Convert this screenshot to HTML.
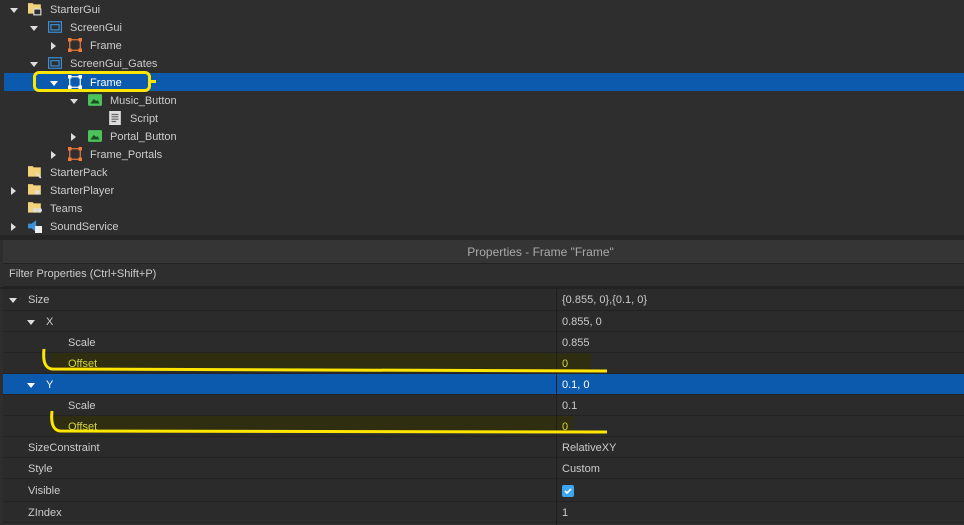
<!DOCTYPE html><html><head><style>
*{margin:0;padding:0;box-sizing:border-box}
body{width:964px;height:525px;background:#2e2e2e;font-family:"Liberation Sans",sans-serif;font-size:11px;color:#cccccc;position:relative;overflow:hidden}
.a{position:absolute}
.tr{position:absolute;left:0;width:964px;height:18px;line-height:20px}
.tri{position:absolute;width:0;height:0}
.down{border-left:4px solid transparent;border-right:4px solid transparent;border-top:5px solid #ddd;top:8px}
.right{border-top:4px solid transparent;border-bottom:4px solid transparent;border-left:5px solid #ddd;top:6px}
.row{position:absolute;left:3px;width:961px;background:#2b2b2b;border-bottom:1px solid #232323}
.row span{position:absolute;top:1px}
.v{left:559px}
.sep{position:absolute;left:556px;top:289px;width:1px;height:236px;background:#1e1e1e}
.ic{position:absolute;top:2px;width:14px;height:14px}
</style></head><body>
<div class="tr" style="top:0"><div class="tri down" style="left:10px"></div>
<svg class="ic" style="left:28px" viewBox="0 0 12 12"><path d="M0 1h4l1 1h6v8H0z" fill="#f2d27a"/><rect x="5" y="6" width="6" height="5" fill="#2e2e2e" stroke="#ddd"/></svg><span class="a" style="left:50px">StarterGui</span></div>
<div class="tr" style="top:18px"><div class="tri down" style="left:30px"></div>
<svg class="ic" style="left:48px" viewBox="0 0 12 12"><rect x=".5" y="1.5" width="11" height="9" fill="none" stroke="#3a8fd8"/><rect x="2.5" y="4" width="7" height="4.5" fill="none" stroke="#3a8fd8"/></svg><span class="a" style="left:70px">ScreenGui</span></div>
<div class="tr" style="top:36px"><div class="tri right" style="left:51px"></div>
<svg class="ic" style="left:68px" viewBox="0 0 12 12"><rect x="1.5" y="1.5" width="9" height="9" fill="none" stroke="#ef7a3a"/><g fill="#ef7a3a"><rect x="0" y="0" width="3" height="3"/><rect x="9" y="0" width="3" height="3"/><rect x="0" y="9" width="3" height="3"/><rect x="9" y="9" width="3" height="3"/></g></svg><span class="a" style="left:90px">Frame</span></div>
<div class="tr" style="top:54px"><div class="tri down" style="left:30px"></div>
<svg class="ic" style="left:48px" viewBox="0 0 12 12"><rect x=".5" y="1.5" width="11" height="9" fill="none" stroke="#3a8fd8"/><rect x="2.5" y="4" width="7" height="4.5" fill="none" stroke="#3a8fd8"/></svg><span class="a" style="left:70px">ScreenGui_Gates</span></div>
<div class="tr" style="top:73px;left:4px;width:960px;background:#0b5aad;color:#fff"><div class="tri down" style="left:46px;border-top-color:#fff"></div>
<svg class="ic" style="left:64px" viewBox="0 0 12 12"><rect x="1.5" y="1.5" width="9" height="9" fill="none" stroke="#fff"/><g fill="#fff"><rect x="0" y="0" width="3" height="3"/><rect x="9" y="0" width="3" height="3"/><rect x="0" y="9" width="3" height="3"/><rect x="9" y="9" width="3" height="3"/></g></svg><span class="a" style="left:86px">Frame</span></div>
<div class="a" style="left:33px;top:71px;width:118px;height:21px;border:3px solid #ffe600;border-radius:6px"></div>
<div class="a" style="left:150px;top:80px;width:6px;height:3px;background:#ffe600"></div>
<div class="tr" style="top:91px"><div class="tri down" style="left:70px"></div>
<svg class="ic" style="left:88px" viewBox="0 0 12 12"><rect x="0" y="1" width="12" height="10" rx="1" fill="#4bc35a"/><path d="M2 9l3-4 2 2 1-1 2 3z" fill="#1d4d22"/></svg><span class="a" style="left:110px">Music_Button</span></div>
<div class="tr" style="top:109px"><svg class="ic" style="left:108px" viewBox="0 0 12 12"><rect x="1" y="0" width="10" height="12" fill="#ddd"/><path d="M3 3h6M3 5h6M3 7h6M3 9h4" stroke="#666"/></svg><span class="a" style="left:130px">Script</span></div>
<div class="tr" style="top:127px"><div class="tri right" style="left:71px"></div>
<svg class="ic" style="left:88px" viewBox="0 0 12 12"><rect x="0" y="1" width="12" height="10" rx="1" fill="#4bc35a"/><path d="M2 9l3-4 2 2 1-1 2 3z" fill="#1d4d22"/></svg><span class="a" style="left:110px">Portal_Button</span></div>
<div class="tr" style="top:145px"><div class="tri right" style="left:51px"></div>
<svg class="ic" style="left:68px" viewBox="0 0 12 12"><rect x="1.5" y="1.5" width="9" height="9" fill="none" stroke="#ef7a3a"/><g fill="#ef7a3a"><rect x="0" y="0" width="3" height="3"/><rect x="9" y="0" width="3" height="3"/><rect x="0" y="9" width="3" height="3"/><rect x="9" y="9" width="3" height="3"/></g></svg><span class="a" style="left:90px">Frame_Portals</span></div>
<div class="tr" style="top:163px"><svg class="ic" style="left:28px" viewBox="0 0 12 12"><path d="M0 1h4l1 1h6v8H0z" fill="#f2d27a"/><path d="M7 7l4 4" stroke="#ddd" stroke-width="1.5"/></svg><span class="a" style="left:50px">StarterPack</span></div>
<div class="tr" style="top:181px"><div class="tri right" style="left:11px"></div><svg class="ic" style="left:28px" viewBox="0 0 12 12"><path d="M0 1h4l1 1h6v8H0z" fill="#f2d27a"/><circle cx="8" cy="8" r="2" fill="#ddd"/></svg><span class="a" style="left:50px">StarterPlayer</span></div>
<div class="tr" style="top:199px"><svg class="ic" style="left:28px" viewBox="0 0 12 12"><path d="M0 1h4l1 1h6v8H0z" fill="#f2d27a"/><circle cx="6" cy="8" r="2" fill="#ddd"/><circle cx="10" cy="8" r="2" fill="#ddd"/></svg><span class="a" style="left:50px">Teams</span></div>
<div class="tr" style="top:217px"><div class="tri right" style="left:11px"></div><svg class="ic" style="left:28px" viewBox="0 0 12 12"><path d="M0 4h3l4-3v10L3 8H0z" fill="#3a8fd8"/><rect x="6" y="6" width="6" height="6" fill="#eee"/></svg><span class="a" style="left:50px">SoundService</span></div>
<div class="a" style="left:0;top:235px;width:964px;height:5px;background:#252525"></div>
<div class="a" style="left:3px;top:240px;width:961px;height:24px;background:#353535;border-bottom:1px solid #222;text-align:center;line-height:25px;color:#aaa;font-size:12px"><span style="position:relative;left:57px">Properties - Frame "Frame"</span></div>
<div class="a" style="left:3px;top:264px;width:961px;height:23px;background:#2e2e2e;border-bottom:1px solid #222;line-height:21px;padding-left:6px;color:#ccc">Filter Properties (Ctrl+Shift+P)</div>
<div class="a" style="left:0;top:287px;width:964px;height:2px;background:#222"></div>
<div class="row" style="top:289px;height:22px;line-height:21px"><div class="tri down" style="left:6px;top:9px"></div><span style="left:25px">Size</span><span class="v">{0.855, 0},{0.1, 0}</span></div>
<div class="row" style="top:311px;height:21px;line-height:20px"><div class="tri down" style="left:24px;top:9px"></div><span style="left:43px">X</span><span class="v">0.855, 0</span></div>
<div class="row" style="top:332px;height:21px;line-height:20px"><span style="left:65px">Scale</span><span class="v">0.855</span></div>
<div class="row" style="top:353px;height:21px;line-height:20px"><div class="a" style="left:48px;top:0;width:540px;height:17px;background:#2f2e10"></div><span style="left:65px;color:#d4d440">Offset</span><span class="v" style="color:#d4d440">0</span></div>
<div class="row" style="top:374px;height:21px;line-height:20px;background:#0b5aad;color:#fff"><div class="tri down" style="left:24px;top:9px;border-top-color:#fff"></div><span style="left:43px">Y</span><span class="v">0.1, 0</span></div>
<div class="row" style="top:395px;height:21px;line-height:20px"><span style="left:65px">Scale</span><span class="v">0.1</span></div>
<div class="row" style="top:416px;height:21px;line-height:20px"><div class="a" style="left:50px;top:0;width:520px;height:17px;background:#2f2e10"></div><span style="left:65px;color:#d4d440">Offset</span><span class="v" style="color:#d4d440">0</span></div>
<div class="row" style="top:437px;height:21px;line-height:20px"><span style="left:25px">SizeConstraint</span><span class="v">RelativeXY</span></div>
<div class="row" style="top:458px;height:21px;line-height:20px"><span style="left:25px">Style</span><span class="v">Custom</span></div>
<div class="row" style="top:479px;height:23px;line-height:22px"><span style="left:25px">Visible</span><span class="v" style="top:6px;width:12px;height:12px;background:#3ba7f0;border-radius:2px"><svg width="12" height="12" style="display:block"><path d="M3 6l2 2 4-4" stroke="#fff" stroke-width="1.6" fill="none"/></svg></span></div>
<div class="row" style="top:502px;height:21px;line-height:20px"><span style="left:25px">ZIndex</span><span class="v">1</span></div>
<div class="sep"></div>
<svg class="a" style="left:0;top:0" width="964" height="525"><path d="M44 349 Q42 368 52 369 L607 371" stroke="#ffe600" stroke-width="3" fill="none"/><path d="M52 411 Q50 430 60 431 L607 432" stroke="#ffe600" stroke-width="3" fill="none"/></svg>
</body></html>
